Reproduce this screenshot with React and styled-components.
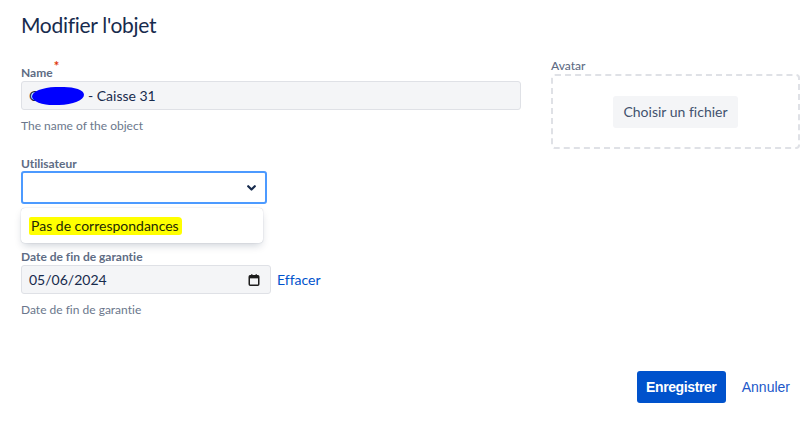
import styled, { createGlobalStyle } from "styled-components";

const GlobalStyle = createGlobalStyle`
  body {
    margin: 0;
    background: #ffffff;
    font-family: Lato, "Noto Sans", sans-serif;
    font-variant-ligatures: none;
    color: #172b4d;
  }
`;

const Page = styled.div`
  width: 806px;
  height: 424px;
  box-sizing: border-box;
  padding: 11px 6px 0 21px;
`;

const Title = styled.h2`
  margin: 0;
  font-size: 21px;
  line-height: 28px;
  font-weight: 400;
  letter-spacing: -0.3px;
  color: #172b4d;
`;

const FormGrid = styled.div`
  display: grid;
  grid-template-columns: 500px 249px;
  column-gap: 30px;
  align-items: start;
  margin-top: 19px;
`;

const Column = styled.div`
  display: flex;
  flex-direction: column;
`;

const Field = styled.div`
  display: flex;
  flex-direction: column;
  align-items: flex-start;
  margin-top: ${({ $gap }) => $gap || 0}px;
`;

const Label = styled.label`
  font-size: 12px;
  line-height: 15px;
  font-weight: ${({ $light }) => ($light ? 500 : 700)};
  color: #5e6c84;
  padding-top: ${({ $offset }) => $offset || 0}px;
`;

const Required = styled.span`
  color: #de350b;
  font-size: 13px;
  position: relative;
  top: -6px;
  margin-left: 1px;
`;

const TextField = styled.div`
  display: flex;
  align-items: center;
  box-sizing: border-box;
  width: ${({ $width }) => $width}px;
  height: 29px;
  margin-top: 1px;
  padding: 0 8px 0 7px;
  background: #f4f5f7;
  border: 1.5px solid #dfe1e6;
  border-radius: 3px;
  font-size: 14px;
  color: #172b4d;
  white-space: pre;
`;

const Redaction = styled.span`
  display: inline-block;
  width: 52px;
  height: 18px;
  margin-left: -6px;
  background: #0000ff;
  border-radius: 45% 40% 48% 42% / 50% 45% 55% 50%;
  transform: rotate(-1deg);
`;

const Helper = styled.div`
  margin-top: 8px;
  font-size: 12px;
  line-height: 16px;
  color: #6b778c;
`;

const SelectBox = styled.div`
  display: flex;
  align-items: center;
  justify-content: flex-end;
  box-sizing: border-box;
  width: 246px;
  height: 33px;
  padding-right: 9px;
  background: #ffffff;
  border: 2px solid #4c9aff;
  border-radius: 3px;
`;

const Menu = styled.div`
  box-sizing: border-box;
  width: 242px;
  height: 35px;
  margin-top: 4px;
  padding: 0 8px;
  display: flex;
  align-items: center;
  background: #ffffff;
  border-radius: 4px;
  box-shadow: 0 4px 8px -2px rgba(9, 30, 66, 0.22),
    0 0 1px rgba(9, 30, 66, 0.31);
`;

const Highlight = styled.span`
  background: #ffff00;
  padding: 1px 3px 1px 2px;
  font-size: 14px;
  line-height: 16px;
  color: #1e2a05;
  border-radius: 2px 4px 3px 2px;
`;

const DateRow = styled.div`
  display: flex;
  align-items: center;
  gap: 6px;
  margin-top: 1px;
`;

const DateField = styled(TextField)`
  margin-top: 0;
  justify-content: space-between;
  padding-right: 10px;
`;

const LinkButton = styled.a`
  font-size: 14px;
  color: ${({ $arial }) => ($arial ? "#2157c9" : "#0052cc")};
  font-family: ${({ $arial }) =>
    $arial ? '"Liberation Sans", Arial, sans-serif' : "inherit"};
  text-decoration: none;
  cursor: pointer;
`;

const DropZone = styled.div`
  box-sizing: border-box;
  width: 249px;
  height: 75px;
  margin-top: 1px;
  display: flex;
  align-items: center;
  justify-content: center;
  border: 2px dashed #dfe1e6;
  border-radius: 4px;
`;

const FileButton = styled.button`
  height: 32px;
  padding: 0 10px;
  border: none;
  border-radius: 3px;
  background: #f4f5f7;
  color: #42526e;
  font-family: inherit;
  font-variant-ligatures: none;
  font-size: 14px;
  cursor: pointer;
`;

const Footer = styled.div`
  display: flex;
  justify-content: flex-end;
  align-items: center;
  gap: 16px;
  margin-top: 53px;
  padding-right: 10px;
`;

const PrimaryButton = styled.button`
  width: 89px;
  height: 32px;
  border: none;
  border-radius: 3px;
  background: #0052cc;
  color: #ffffff;
  font-family: "Liberation Sans", Arial, sans-serif;
  font-weight: 700;
  font-size: 14px;
  letter-spacing: -0.4px;
  cursor: pointer;
`;

const Chevron = () => (
  <svg width="9" height="6" viewBox="0 0 9 6">
    <path
      d="M1.2 1.2 L4.5 4.5 L7.8 1.2"
      fill="none"
      stroke="#172b4d"
      strokeWidth="2.2"
      strokeLinecap="round"
      strokeLinejoin="round"
    />
  </svg>
);

const CalendarIcon = () => (
  <svg width="12" height="12" viewBox="0 0 12 12">
    <rect x="1.25" y="1.75" width="9.5" height="9.5" rx="1" fill="none" stroke="#1d1d1d" strokeWidth="1.5" />
    <rect x="1.25" y="1.75" width="9.5" height="2.6" fill="#1d1d1d" />
    <rect x="3" y="0.3" width="1.5" height="2" fill="#1d1d1d" />
    <rect x="7.5" y="0.3" width="1.5" height="2" fill="#1d1d1d" />
  </svg>
);

export default function App() {
  return (
    <>
      <GlobalStyle />
      <Page>
        <Title>Modifier l'objet</Title>
        <FormGrid>
          <Column>
            <Field>
              <Label $offset={7}>
                Name<Required>*</Required>
              </Label>
              <TextField $width={500}>
                C<Redaction /> - Caisse 31
              </TextField>
              <Helper>The name of the object</Helper>
            </Field>

            <Field $gap={22}>
              <Label>Utilisateur</Label>
              <SelectBox>
                <Chevron />
              </SelectBox>
              <Menu>
                <Highlight>Pas de correspondances</Highlight>
              </Menu>
            </Field>

            <Field $gap={6}>
              <Label>Date de fin de garantie</Label>
              <DateRow>
                <DateField $width={250}>
                  05/06/2024
                  <CalendarIcon />
                </DateField>
                <LinkButton>Effacer</LinkButton>
              </DateRow>
              <Helper>Date de fin de garantie</Helper>
            </Field>
          </Column>

          <Column>
            <Label $light>Avatar</Label>
            <DropZone>
              <FileButton>Choisir un fichier</FileButton>
            </DropZone>
          </Column>
        </FormGrid>

        <Footer>
          <PrimaryButton>Enregistrer</PrimaryButton>
          <LinkButton $arial>Annuler</LinkButton>
        </Footer>
      </Page>
    </>
  );
}
